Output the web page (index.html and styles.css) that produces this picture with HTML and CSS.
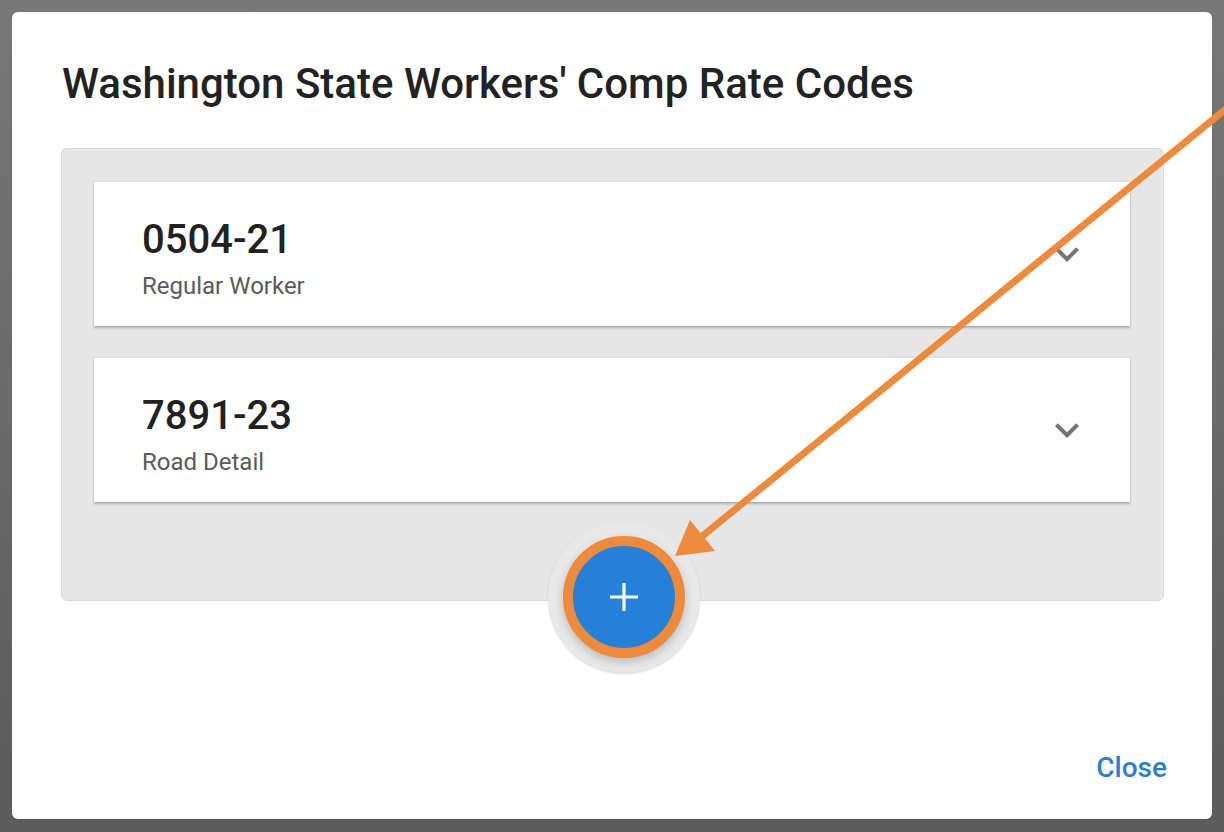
FILE: index.html
```html
<!DOCTYPE html>
<html lang="en">
<head>
  <meta charset="UTF-8" />
  <meta name="viewport" content="width=device-width, initial-scale=1.0"/>
  <title>Rate Codes</title>
  <link rel="stylesheet" href="styles.css">
</head>
<body>

  <div class="dialog">
    <h2 class="dialog-title">Washington State Workers' Comp Rate Codes</h2>

    <div class="panel">
      <div class="code-card">
        <div class="code-info">
          <div class="code-num">0504-21</div>
          <div class="code-desc">Regular Worker</div>
        </div>
        <svg class="chevron" viewBox="0 0 24 24"><path d="M16.59 8.59L12 13.17 7.41 8.59 6 10l6 6 6-6z"/></svg>
      </div>

      <div class="code-card">
        <div class="code-info">
          <div class="code-num">7891-23</div>
          <div class="code-desc">Road Detail</div>
        </div>
        <svg class="chevron" viewBox="0 0 24 24"><path d="M16.59 8.59L12 13.17 7.41 8.59 6 10l6 6 6-6z"/></svg>
      </div>

      <div class="fab-wrap">
        <div class="fab-halo">
          <button class="fab">
            <svg viewBox="0 0 24 24"><path d="M12 4v16M4 12h16" /></svg>
          </button>
        </div>
      </div>
    </div>

    <div class="dialog-actions">
      <button class="btn-close">Close</button>
    </div>
  </div>

  <!-- annotation arrow -->
  <svg class="annotation" viewBox="0 0 1224 832">
    <line x1="1232" y1="104" x2="700" y2="538" />
    <polygon points="675,556 690,520 715,551" />
  </svg>

</body>
</html>
```

FILE: styles.css
```css
body {
  margin: 0;
  height: 832px;
  padding: 12px;
  box-sizing: border-box;
  background: linear-gradient(#777, #5b5b5b);
  font-family: Roboto, "Liberation Sans", sans-serif;
  overflow: hidden;
}

.dialog {
  background-color: #fff;
  border-radius: 6px;
  height: 807px;
  padding: 48px 45px 35px 50px;
  box-sizing: border-box;
  display: flex;
  flex-direction: column;
}

.dialog-title {
  margin: 0 0 40px;
  font-size: 42px;
  line-height: 48px;
  font-weight: 500;
  color: #222;
}

.panel {
  background-color: #e6e6e6;
  border: 1px solid #d9d9d9;
  border-radius: 6px;
  margin-right: 3px;
  margin-left: -1px;
  padding: 33px 33px 0 32px;
  display: flex;
  flex-direction: column;
  gap: 32px;
}

.code-card {
  background-color: #fff;
  height: 144px;
  box-sizing: border-box;
  padding: 34px 39px 0 48px;
  display: flex;
  align-items: flex-start;
  justify-content: space-between;
  box-shadow: 0 2px 2px rgba(0,0,0,0.24), 0 0 2px rgba(0,0,0,0.1);
}

.code-num {
  font-size: 40px;
  line-height: 48px;
  font-weight: 500;
  color: #212121;
}

.code-desc {
  margin-top: 8px;
  font-size: 24px;
  line-height: 28px;
  color: #5a5a5a;
}

.chevron {
  width: 48px;
  height: 48px;
  fill: #757575;
  align-self: center;
  margin-top: -34px;
}

.fab-wrap {
  display: flex;
  justify-content: center;
  padding-left: 24px;
  margin-top: -13px;
  margin-bottom: -73px;
}

.fab-halo {
  width: 152px;
  height: 152px;
  border-radius: 50%;
  background-color: #e8e8e8;
  box-shadow: 0 1px 2px rgba(0,0,0,0.16);
  display: flex;
  align-items: center;
  justify-content: center;
}

.fab {
  width: 122px;
  height: 122px;
  border-radius: 50%;
  border: 10px solid #ee8a3c;
  background-color: #2580d9;
  padding: 0;
  display: flex;
  align-items: center;
  justify-content: center;
  box-shadow: 0 4px 10px rgba(0,0,0,0.2);
  cursor: pointer;
}

.fab svg {
  width: 42px;
  height: 42px;
  stroke: #fff;
  stroke-width: 1.8;
  fill: none;
}

.dialog-actions {
  margin-top: auto;
  display: flex;
  justify-content: flex-end;
}

.btn-close {
  background: none;
  border: none;
  padding: 0;
  font-family: inherit;
  font-size: 28px;
  line-height: 32px;
  font-weight: 500;
  color: #2a7fd4;
  cursor: pointer;
}

.annotation {
  position: absolute;
  left: 0;
  top: 0;
  width: 1224px;
  height: 832px;
  pointer-events: none;
}

.annotation line {
  stroke: #ee8a3c;
  stroke-width: 7;
}

.annotation polygon {
  fill: #ee8a3c;
}
```
